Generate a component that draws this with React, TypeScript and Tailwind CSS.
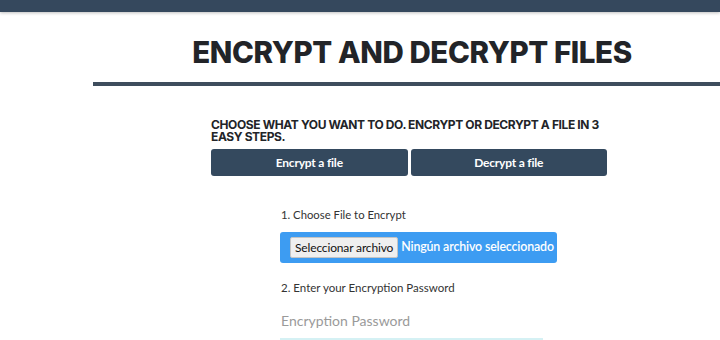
import React from "react";

export default function App() {
  return (
    <div className="w-[720px] h-[340px] overflow-hidden bg-white" style={{ fontFamily: "Lato, 'Liberation Sans', sans-serif" }}>
      <div className="h-3 bg-[#35485d] shadow-[0_1px_3px_rgba(0,0,0,0.25)]" />
      <div className="ml-[93px] w-[638px]">
        <h1
          className="mt-[22px] text-center text-[29.5px] leading-[36px] font-extrabold text-[#222428] tracking-[-0.4px] whitespace-nowrap"
          style={{ fontFamily: "Inter, 'Open Sans', sans-serif" }}
        >
          ENCRYPT AND DECRYPT FILES
        </h1>
        <div className="mt-[12px] h-[4px] bg-[#3e4d5d]" />
      </div>
      <div className="ml-[211px] w-[396px] mt-[33px]">
        <p
          className="text-[12px] leading-[12px] font-bold text-[#222428] tracking-[-0.38px] whitespace-nowrap"
          style={{ fontFamily: "Inter, 'Open Sans', sans-serif" }}
        >
          CHOOSE WHAT YOU WANT TO DO. ENCRYPT OR DECRYPT A FILE IN 3
          <br />
          EASY STEPS.
        </p>
        <div className="mt-[6px] flex gap-[3px]">
          <button className="h-[27px] flex-1 rounded-[3px] bg-[#34495e] text-white text-[12px] font-bold tracking-[-0.2px]">
            Encrypt a file
          </button>
          <button className="h-[27px] flex-1 rounded-[3px] bg-[#34495e] text-white text-[12px] font-bold tracking-[-0.2px]">
            Decrypt a file
          </button>
        </div>
      </div>
      <div className="ml-[280px] w-[277px] mt-[31px]">
        <p className="pl-[1px] text-[11.3px] leading-[16px] text-[#333]">1. Choose File to Encrypt</p>
        <div className="mt-[9px] h-[31px] rounded-[3px] bg-[#3d9cf2] flex items-center pl-[10px] gap-[3px] whitespace-nowrap">
          <span className="h-[21px] px-[4px] flex items-center bg-[#efefef] border border-[#c4c4c4] rounded-[2px] text-[12px] tracking-[-0.15px] text-[#111]">
            Seleccionar archivo
          </span>
          <span className="text-[12.4px] tracking-[-0.15px] text-white font-semibold">Ningún archivo seleccionado</span>
        </div>
        <p className="mt-[17px] pl-[1px] text-[11.5px] leading-[16px] text-[#333]">2. Enter your Encryption Password</p>
        <div className="mt-[15px] w-[263px] border-b-2 border-[#d5f1f4] pb-[7px] pl-[1px] text-[14px] leading-[20px] text-[#9a9a9a]">
          Encryption Password
        </div>
      </div>
    </div>
  );
}
